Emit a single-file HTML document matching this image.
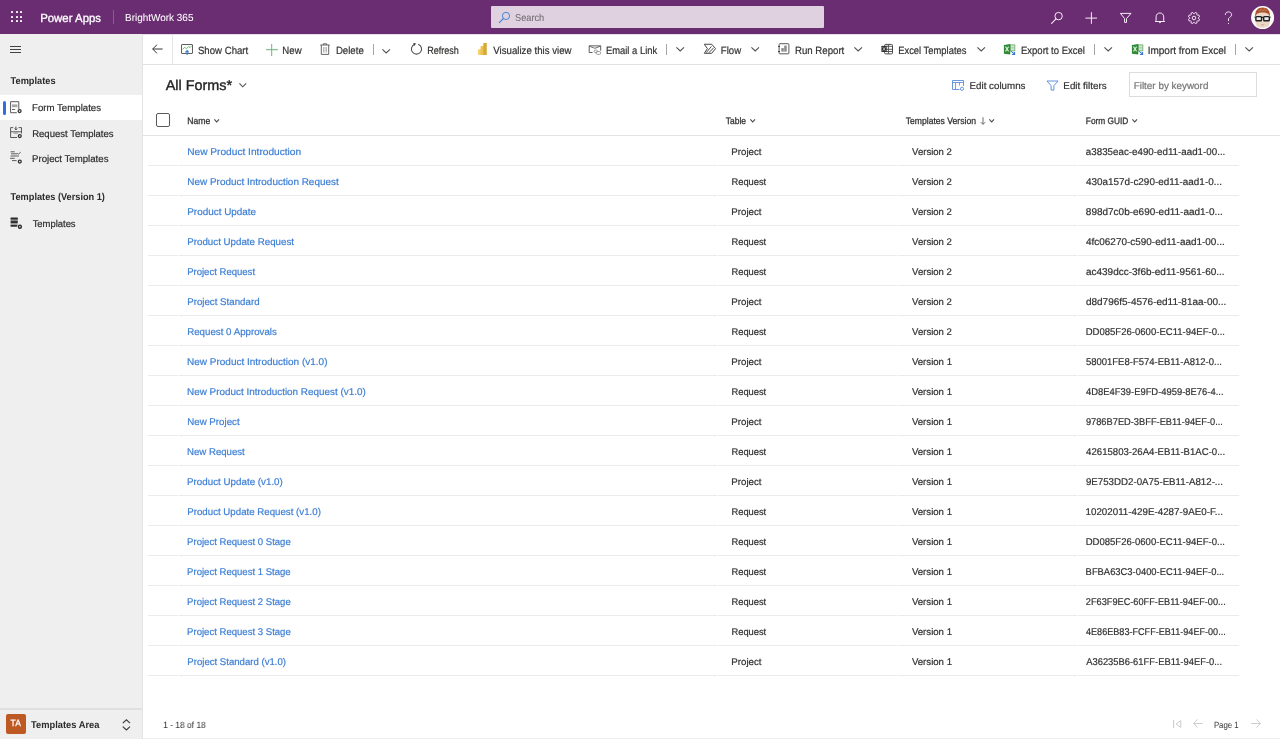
<!DOCTYPE html><html><head><meta charset="utf-8"><style>
*{margin:0;padding:0;box-sizing:border-box}
html,body{width:1280px;height:739px;overflow:hidden;background:#fff;font-family:"Liberation Sans",sans-serif}
.t{position:absolute;white-space:nowrap;line-height:20px;height:20px;text-rendering:geometricPrecision}
#root{position:absolute;left:0;top:0;width:1280px;height:739px;will-change:transform}
.b{position:absolute}
svg{position:absolute;overflow:visible}
</style></head><body><div id="root">
<div class="b" style="left:0;top:0;width:1280px;height:34px;background:#6b2d72"></div>
<div class="b" style="left:11.0px;top:11.0px;width:2.2px;height:2.2px;background:#fff;border-radius:0.4px"></div>
<div class="b" style="left:11.0px;top:15.6px;width:2.2px;height:2.2px;background:#fff;border-radius:0.4px"></div>
<div class="b" style="left:11.0px;top:20.2px;width:2.2px;height:2.2px;background:#fff;border-radius:0.4px"></div>
<div class="b" style="left:15.6px;top:11.0px;width:2.2px;height:2.2px;background:#fff;border-radius:0.4px"></div>
<div class="b" style="left:15.6px;top:15.6px;width:2.2px;height:2.2px;background:#fff;border-radius:0.4px"></div>
<div class="b" style="left:15.6px;top:20.2px;width:2.2px;height:2.2px;background:#fff;border-radius:0.4px"></div>
<div class="b" style="left:20.2px;top:11.0px;width:2.2px;height:2.2px;background:#fff;border-radius:0.4px"></div>
<div class="b" style="left:20.2px;top:15.6px;width:2.2px;height:2.2px;background:#fff;border-radius:0.4px"></div>
<div class="b" style="left:20.2px;top:20.2px;width:2.2px;height:2.2px;background:#fff;border-radius:0.4px"></div>
<div class="t" id="x18d236" style="left:40px;top:8.78px;font-size:11.7px;color:#fff;font-weight:400;-webkit-text-stroke:0.3px #fff;transform:translateX(0.176px) scaleX(0.9756);transform-origin:0 50%;">Power Apps</div>
<div class="b" style="left:113px;top:10px;width:1px;height:14px;background:#8e5a92"></div>
<div class="t" id="xe81292" style="left:125px;top:9.27px;font-size:10.3px;color:#fff;font-weight:400;-webkit-text-stroke:0.05px #fff;transform:translateX(0.061px) scaleX(0.9659);transform-origin:0 50%;">BrightWork 365</div>
<div class="b" style="left:491px;top:6px;width:333px;height:22px;background:#dfd1e0;border-radius:1px"></div>
<svg style="left:498px;top:11px" width="13" height="13" viewBox="0 0 13 13"><circle cx="8" cy="4.9" r="3.6" fill="none" stroke="#4a84d0" stroke-width="1"/><line x1="5.4" y1="7.5" x2="1.3" y2="11.6" stroke="#4a84d0" stroke-width="1.1" stroke-linecap="round"/></svg>
<div class="t" id="x43c09c" style="left:515px;top:8.97px;font-size:10.0px;color:#6f6a70;font-weight:400;-webkit-text-stroke:0.05px #6f6a70;transform:translateX(0.079px) scaleX(0.9200);transform-origin:0 50%;">Search</div>
<svg style="left:1050px;top:11px" width="14" height="14" viewBox="0 0 14 14"><circle cx="8.6" cy="5.1" r="3.7" fill="none" stroke="#f4eef5" stroke-width="1"/><line x1="6" y1="7.8" x2="1.6" y2="12.4" stroke="#f4eef5" stroke-width="1.1" stroke-linecap="round"/></svg>
<svg style="left:1085px;top:12px" width="13" height="13" viewBox="0 0 13 13"><line x1="6.4" y1="0.2" x2="6.4" y2="11.8" stroke="#f4eef5" stroke-width="1"/><line x1="0.4" y1="6.1" x2="12" y2="6.1" stroke="#f4eef5" stroke-width="1"/></svg>
<svg style="left:1119px;top:12px" width="13" height="12" viewBox="0 0 13 12"><path d="M1.4 1.4 H12 L7.5 6.6 V10.4 H5.6 V6.6 Z" fill="none" stroke="#f4eef5" stroke-width="1" stroke-linejoin="round"/></svg>
<svg style="left:1154px;top:12px" width="12" height="12" viewBox="0 0 12 12"><path d="M1.1 9.5 L2.1 8.7 V4.9 C2.1 2.5 3.7 1 5.9 1 C8.1 1 9.7 2.5 9.7 4.9 V8.7 L10.7 9.5 Z" fill="none" stroke="#f4eef5" stroke-width="1" stroke-linejoin="round"/><path d="M4.9 10.2 Q5.9 11.4 6.9 10.2" fill="#f4eef5" stroke="#f4eef5" stroke-width="0.8"/></svg>
<svg style="left:1187px;top:11px" width="14" height="14" viewBox="0 0 14 14"><path d="M11.38 7.41 L12.56 8.26 L11.82 10.04 L10.39 9.81 L9.81 10.39 L10.04 11.82 L8.26 12.56 L7.41 11.38 L6.59 11.38 L5.74 12.56 L3.96 11.82 L4.19 10.39 L3.61 9.81 L2.18 10.04 L1.44 8.26 L2.62 7.41 L2.62 6.59 L1.44 5.74 L2.18 3.96 L3.61 4.19 L4.19 3.61 L3.96 2.18 L5.74 1.44 L6.59 2.62 L7.41 2.62 L8.26 1.44 L10.04 2.18 L9.81 3.61 L10.39 4.19 L11.82 3.96 L12.56 5.74 L11.38 6.59 Z" fill="none" stroke="#f4eef5" stroke-width="0.95" stroke-linejoin="round"/><circle cx="7" cy="7" r="1.8" fill="none" stroke="#f4eef5" stroke-width="0.95"/></svg>
<svg style="left:1224px;top:11px" width="9" height="14" viewBox="0 0 9 14"><path d="M1.3 3.9 C1.3 2 2.6 0.9 4.5 0.9 C6.4 0.9 7.6 2.1 7.6 3.7 C7.6 5.6 5.6 6.1 4.5 7.6 V10" fill="none" stroke="#f4eef5" stroke-width="1"/><circle cx="4.5" cy="12.3" r="0.6" fill="#f4eef5"/></svg>
<svg style="left:1251px;top:5.5px" width="23" height="23" viewBox="0 0 23 23">
<circle cx="11.6" cy="11.6" r="11.5" fill="#fff"/>
<clipPath id="av"><circle cx="11.6" cy="11.6" r="10.4"/></clipPath>
<g clip-path="url(#av)">
<rect x="0" y="0" width="23" height="23" fill="#fbf7f4"/>
<path d="M4.6 10 C4.6 5 7.5 3.5 11.6 3.5 C15.7 3.5 18.6 5 18.6 10 V16 C18.6 20 15.5 23 11.6 23 C7.7 23 4.6 20 4.6 16 Z" fill="#ecd6c6"/>
<path d="M4.3 11 C3.8 5 6.5 1.2 11.6 1.2 C16.7 1.2 19.4 5 18.9 11 L17.8 8.6 C16.8 7.2 14 6.6 11.6 6.6 C9.2 6.6 6.4 7.2 5.4 8.6 Z" fill="#a8512c"/>
<path d="M7 3.2 L9 5.5 L10.2 2.6 L12 5.2 L13.6 2.4 L14.6 5.4 L16.6 3.6" fill="none" stroke="#d4895c" stroke-width="0.6"/>
<rect x="4.9" y="10.6" width="5.6" height="4.2" rx="0.8" fill="#e8eef0" stroke="#1e1e1e" stroke-width="1.4"/>
<rect x="12.7" y="10.6" width="5.6" height="4.2" rx="0.8" fill="#e8eef0" stroke="#1e1e1e" stroke-width="1.4"/>
<line x1="10.5" y1="11.4" x2="12.7" y2="11.4" stroke="#1e1e1e" stroke-width="1.1"/>
<line x1="3.5" y1="11.2" x2="4.9" y2="11.2" stroke="#1e1e1e" stroke-width="1"/>
<line x1="18.3" y1="11.2" x2="19.7" y2="11.2" stroke="#1e1e1e" stroke-width="1"/>
<path d="M10 18.6 Q11.6 19.4 13.2 18.6" stroke="#b89080" stroke-width="0.7" fill="none"/>
</g></svg>
<div class="b" style="left:0;top:34px;width:142px;height:705px;background:#efefef"></div>
<div class="b" style="left:142px;top:34px;width:1px;height:705px;background:#e3e3e3"></div>
<div class="b" style="left:10px;top:45.8px;width:11px;height:1.05px;background:#424242"></div>
<div class="b" style="left:10px;top:49.0px;width:11px;height:1.05px;background:#424242"></div>
<div class="b" style="left:10px;top:52.2px;width:11px;height:1.05px;background:#424242"></div>
<div class="t" id="x2fcbae" style="left:10px;top:71.86px;font-size:9.9px;color:#2b2b2b;font-weight:700;transform:translateX(0.574px) scaleX(0.9346);transform-origin:0 50%;">Templates</div>
<div class="b" style="left:0;top:95px;width:142px;height:25px;background:#fff"></div>
<div class="b" style="left:3px;top:100.5px;width:2.6px;height:14px;background:#2f6fe0;border-radius:2px"></div>
<div class="t" id="xf29466" style="left:32px;top:99.46px;font-size:9.8px;color:#2b2b2b;font-weight:400;-webkit-text-stroke:0.18px #2b2b2b;transform:translateX(0.030px) scaleX(0.9848);transform-origin:0 50%;">Form Templates</div>
<div class="t" id="xf2a408" style="left:32px;top:124.96px;font-size:9.8px;color:#2b2b2b;font-weight:400;-webkit-text-stroke:0.18px #2b2b2b;transform:translateX(0.192px) scaleX(0.9723);transform-origin:0 50%;">Request Templates</div>
<div class="t" id="x5faf2b" style="left:32px;top:149.76px;font-size:9.8px;color:#2b2b2b;font-weight:400;-webkit-text-stroke:0.18px #2b2b2b;transform:translateX(0.051px) scaleX(0.9838);transform-origin:0 50%;">Project Templates</div>
<div class="t" id="x6ffbcc" style="left:10px;top:187.76px;font-size:9.9px;color:#2b2b2b;font-weight:700;transform:translateX(0.574px) scaleX(0.9308);transform-origin:0 50%;">Templates (Version 1)</div>
<div class="t" id="x00e6b2" style="left:32px;top:215.16px;font-size:9.8px;color:#2b2b2b;font-weight:400;-webkit-text-stroke:0.18px #2b2b2b;transform:translateX(0.627px) scaleX(0.9620);transform-origin:0 50%;">Templates</div>
<svg style="left:10px;top:101px" width="13" height="13" viewBox="0 0 13 13"><path d="M6.8 11.7 H0.6 V0.7 H8.8 V8" fill="none" stroke="#5a5a5a" stroke-width="1"/><rect x="2" y="3.4" width="5.5" height="2.8" fill="#a8a8a8"/><line x1="2" y1="8.5" x2="5.2" y2="8.5" stroke="#555" stroke-width="0.9"/><circle cx="9.6" cy="10.1" r="1.45" fill="none" stroke="#333" stroke-width="1.3"/></svg>
<svg style="left:10px;top:126px" width="13" height="13" viewBox="0 0 13 13"><path d="M3.2 1.6 H0.6 V11.5 H7 M8.6 1.6 H11.5 V7.5" fill="none" stroke="#5a5a5a" stroke-width="1"/><path d="M5.9 0.6 V3.8 M4.6 2.6 L5.9 3.9 L7.2 2.6" fill="none" stroke="#444" stroke-width="1"/><path d="M0.6 5.8 H11.5" stroke="#5a5a5a" stroke-width="1"/><rect x="3.6" y="6.6" width="4.2" height="1" fill="#888"/><circle cx="9.8" cy="10.1" r="1.45" fill="none" stroke="#333" stroke-width="1.3"/></svg>
<svg style="left:10px;top:151px" width="13" height="13" viewBox="0 0 13 13"><g stroke="#555" stroke-width="0.95" fill="none"><line x1="0.6" y1="0.8" x2="4.7" y2="0.8"/><line x1="1" y1="2.8" x2="7" y2="2.8"/><line x1="0.6" y1="5" x2="8.9" y2="5"/><line x1="0.1" y1="7.3" x2="4.7" y2="7.3"/><line x1="2" y1="9.6" x2="6.6" y2="9.6"/><path d="M7.2 2.3 L8.3 3.2 L10.7 1.2"/></g><circle cx="9.8" cy="10.6" r="1.45" fill="none" stroke="#333" stroke-width="1.3"/></svg>
<svg style="left:10px;top:217px" width="13" height="13" viewBox="0 0 13 13"><g fill="#2e2e2e"><rect x="0.4" y="0.4" width="7.6" height="2.4" rx="1"/><rect x="0.4" y="4.1" width="7.6" height="1.9" rx="0.9"/><rect x="0.4" y="7.8" width="7" height="2" rx="1"/></g><rect x="0.6" y="2.8" width="7.2" height="1.3" fill="#888"/><rect x="0.6" y="6" width="7.2" height="1.8" fill="#999"/><circle cx="9.9" cy="9.8" r="1.5" fill="none" stroke="#2e2e2e" stroke-width="1.4"/></svg>
<div class="b" style="left:0;top:708.2px;width:142px;height:1.4px;background:#e0e0e0"></div>
<div class="b" style="left:6px;top:714.3px;width:19.8px;height:19.7px;background:#bd5a24;border-radius:2px"></div>
<div class="t" id="x807190" style="left:10px;top:713.46px;font-size:9.2px;color:#fff;font-weight:400;-webkit-text-stroke:0.25px #fff;transform:translateX(0.600px) scaleX(0.9200);transform-origin:0 50%;">TA</div>
<div class="t" id="xf5900a" style="left:31px;top:716.46px;font-size:9.9px;color:#2b2b2b;font-weight:700;transform:translateX(0.123px) scaleX(0.9421);transform-origin:0 50%;">Templates Area</div>
<svg style="left:122px;top:718.5px" width="9" height="12" viewBox="0 0 9 12"><path d="M0.8 4.2 L4.4 0.8 L8 4.2 M0.8 7.6 L4.4 11 L8 7.6" fill="none" stroke="#3a3a3a" stroke-width="1.1"/></svg>
<div class="b" style="left:143px;top:64px;width:1137px;height:1px;background:#e1e1e1"></div>
<div class="b" style="left:143px;top:34px;width:1137px;height:1px;background:#e6dbe8"></div>
<div class="b" style="left:172px;top:34px;width:1px;height:30px;background:#e6e6e6"></div>
<svg style="left:152px;top:44px" width="11" height="10" viewBox="0 0 11 10"><path d="M5 0.6 L0.7 5 L5 9.4 M0.7 5 H10.6" fill="none" stroke="#333" stroke-width="1"/></svg>
<div class="t" id="x7f6c63" style="left:197px;top:40.87px;font-size:10.5px;color:#323130;font-weight:400;-webkit-text-stroke:0.2px #323130;transform:translateX(0.957px) scaleX(0.9161);transform-origin:0 50%;">Show Chart</div>
<div class="t" id="xf1ddd7" style="left:282px;top:40.87px;font-size:10.5px;color:#323130;font-weight:400;-webkit-text-stroke:0.2px #323130;transform:translateX(0.346px) scaleX(0.9160);transform-origin:0 50%;">New</div>
<div class="t" id="xbff0ca" style="left:335px;top:40.87px;font-size:10.5px;color:#323130;font-weight:400;-webkit-text-stroke:0.2px #323130;transform:translateX(0.888px) scaleX(0.9186);transform-origin:0 50%;">Delete</div>
<div class="t" id="x484978" style="left:427px;top:40.87px;font-size:10.5px;color:#323130;font-weight:400;-webkit-text-stroke:0.2px #323130;transform:translateX(0.240px) scaleX(0.8608);transform-origin:0 50%;">Refresh</div>
<div class="t" id="xdd81b7" style="left:493px;top:40.87px;font-size:10.5px;color:#323130;font-weight:400;-webkit-text-stroke:0.2px #323130;transform:translateX(0.316px) scaleX(0.9207);transform-origin:0 50%;">Visualize this view</div>
<div class="t" id="x4cb0bd" style="left:605px;top:40.87px;font-size:10.5px;color:#323130;font-weight:400;-webkit-text-stroke:0.2px #323130;transform:translateX(0.889px) scaleX(0.8965);transform-origin:0 50%;">Email a Link</div>
<div class="t" id="x7f5c37" style="left:720px;top:40.87px;font-size:10.5px;color:#323130;font-weight:400;-webkit-text-stroke:0.2px #323130;transform:translateX(0.820px) scaleX(0.9126);transform-origin:0 50%;">Flow</div>
<div class="t" id="x54bcff" style="left:794px;top:40.87px;font-size:10.5px;color:#323130;font-weight:400;-webkit-text-stroke:0.2px #323130;transform:translateX(0.924px) scaleX(0.9193);transform-origin:0 50%;">Run Report</div>
<div class="t" id="x347453" style="left:898px;top:40.87px;font-size:10.5px;color:#323130;font-weight:400;-webkit-text-stroke:0.2px #323130;transform:translateX(0.178px) scaleX(0.8949);transform-origin:0 50%;">Excel Templates</div>
<div class="t" id="xcdff4d" style="left:1020px;top:40.87px;font-size:10.5px;color:#323130;font-weight:400;-webkit-text-stroke:0.2px #323130;transform:translateX(0.939px) scaleX(0.9063);transform-origin:0 50%;">Export to Excel</div>
<div class="t" id="xe7a639" style="left:1147px;top:40.87px;font-size:10.5px;color:#323130;font-weight:400;-webkit-text-stroke:0.2px #323130;transform:translateX(0.702px) scaleX(0.9523);transform-origin:0 50%;">Import from Excel</div>
<div class="b" style="left:372.8px;top:43.7px;width:1px;height:10.9px;background:#a6a6a6"></div>
<svg style="left:382px;top:48.6px" width="8.4" height="4.3" viewBox="0 0 8.4 4.3"><path d="M0.4 0.4 L4.2 3.9 L8.0 0.4" fill="none" stroke="#505050" stroke-width="1.1"/></svg>
<div class="b" style="left:666.2px;top:43.7px;width:1px;height:10.9px;background:#a6a6a6"></div>
<svg style="left:675.7px;top:47.1px" width="8.4" height="4.3" viewBox="0 0 8.4 4.3"><path d="M0.4 0.4 L4.2 3.9 L8.0 0.4" fill="none" stroke="#505050" stroke-width="1.1"/></svg>
<svg style="left:751px;top:47.0px" width="8.4" height="4.3" viewBox="0 0 8.4 4.3"><path d="M0.4 0.4 L4.2 3.9 L8.0 0.4" fill="none" stroke="#505050" stroke-width="1.1"/></svg>
<svg style="left:854.3px;top:46.9px" width="8.4" height="4.3" viewBox="0 0 8.4 4.3"><path d="M0.4 0.4 L4.2 3.9 L8.0 0.4" fill="none" stroke="#505050" stroke-width="1.1"/></svg>
<svg style="left:977px;top:47.0px" width="8.4" height="4.3" viewBox="0 0 8.4 4.3"><path d="M0.4 0.4 L4.2 3.9 L8.0 0.4" fill="none" stroke="#505050" stroke-width="1.1"/></svg>
<div class="b" style="left:1094.2px;top:43.7px;width:1px;height:10.9px;background:#a6a6a6"></div>
<svg style="left:1103.5px;top:47.0px" width="8.4" height="4.3" viewBox="0 0 8.4 4.3"><path d="M0.4 0.4 L4.2 3.9 L8.0 0.4" fill="none" stroke="#505050" stroke-width="1.1"/></svg>
<div class="b" style="left:1235.2px;top:43.7px;width:1px;height:10.9px;background:#a6a6a6"></div>
<svg style="left:1244.5px;top:47.0px" width="8.4" height="4.3" viewBox="0 0 8.4 4.3"><path d="M0.4 0.4 L4.2 3.9 L8.0 0.4" fill="none" stroke="#505050" stroke-width="1.1"/></svg>
<svg style="left:181px;top:44px" width="12" height="11" viewBox="0 0 12 11"><rect x="0.5" y="0.5" width="11" height="9" rx="0.4" fill="none" stroke="#555" stroke-width="0.95"/><path d="M1.6 5.5 L3.6 3.3 L5.4 4.6 L7.6 2.6 L9 3.6 L10.6 1.9" fill="none" stroke="#5cb85c" stroke-width="0.9"/><path d="M6.1 11 V7 M4.4 8.4 L6.1 6.6 L7.8 8.4" fill="none" stroke="#3f7fd4" stroke-width="1.1"/></svg>
<svg style="left:265.5px;top:43.5px" width="12" height="12" viewBox="0 0 12 12"><path d="M5.7 0 V12 M0 5.7 H12" stroke="#5fb26a" stroke-width="0.95"/></svg>
<svg style="left:319.5px;top:43px" width="10" height="12" viewBox="0 0 10 12"><path d="M0.3 2 H9.7 M3.3 2 V0.8 H6.7 V2 M1.3 2 V11.4 H8.7 V2" fill="none" stroke="#555" stroke-width="0.9"/><path d="M3.5 4 V9.5 M5 4 V9.5 M6.5 4 V9.5" stroke="#888" stroke-width="0.6"/></svg>
<svg style="left:409px;top:42px" width="16" height="14" viewBox="0 0 16 14"><path d="M9.24 2.21 A5.1 5.1 0 1 1 5.76 2.21" fill="none" stroke="#4a4a4a" stroke-width="1.05"/><path d="M4.3 0.9 L7.1 1.5 L5.2 4.0 Z" fill="#333"/></svg>
<svg style="left:478.3px;top:43.2px" width="9" height="12" viewBox="0 0 9 12"><rect x="0" y="6.2" width="3.4" height="5.7" rx="0.5" fill="#f3d36a"/><rect x="2.6" y="3.1" width="3.4" height="8.8" rx="0.5" fill="#ebc14f"/><rect x="5.3" y="0" width="3.5" height="11.9" rx="0.5" fill="#d9a937"/></svg>
<svg style="left:588px;top:44px" width="14" height="12" viewBox="0 0 14 12"><path d="M4.5 8.5 H1.2 V1.85 H12.7 V6.7" fill="none" stroke="#555" stroke-width="0.95"/><path d="M1.2 2.1 L6.9 4.3 L12.7 2.1" fill="none" stroke="#666" stroke-width="0.95"/><rect x="6.1" y="6.1" width="3.3" height="2.4" rx="1.1" fill="none" stroke="#888" stroke-width="0.8"/><rect x="8.1" y="7.5" width="4.5" height="2.9" rx="1.2" fill="none" stroke="#888" stroke-width="0.8"/></svg>
<svg style="left:703px;top:43px" width="14" height="12" viewBox="0 0 14 12"><path d="M1.3 1.25 H8.7 L12.6 5.6 L8.7 10.3 H1.3 L4.4 5.6 Z" fill="none" stroke="#444" stroke-width="1" stroke-linejoin="round"/><path d="M3.3 9.6 L8.5 3.3 M5.9 9.8 L10.6 4.8" stroke="#444" stroke-width="0.95"/></svg>
<svg style="left:777px;top:42px" width="14" height="14" viewBox="0 0 14 14"><rect x="2.1" y="1.7" width="9.8" height="10.1" rx="0.8" fill="none" stroke="#5a5a5a" stroke-width="1"/><path d="M1 4.5 H3 M1 9.5 H3" stroke="#444" stroke-width="1.2"/><rect x="4.3" y="6.1" width="2.5" height="3.5" fill="#8a8a8a"/><rect x="7.2" y="3.6" width="2.5" height="6" fill="#8a8a8a"/></svg>
<svg style="left:880px;top:43px" width="14" height="12" viewBox="0 0 14 12"><rect x="4.6" y="1.4" width="7.9" height="9.5" rx="1" fill="#fff" stroke="#4a4a4a" stroke-width="1"/><path d="M4.6 3.3 H12.5 M4.6 6.3 H12.5 M4.6 8.5 H12.5 M8.4 1.4 V10.9" stroke="#4a4a4a" stroke-width="0.9"/><rect x="1.4" y="2.9" width="5.3" height="6.1" fill="#333"/><path d="M2.7 4.2 L5.4 7.7 M5.4 4.2 L2.7 7.7" stroke="#bbb" stroke-width="0.9"/></svg>
<svg style="left:1003px;top:43px" width="14" height="13" viewBox="0 0 14 13"><rect x="7.2" y="1.9" width="4.6" height="5.9" fill="#d3e8d3" stroke="#6fae6f" stroke-width="0.9"/><path d="M7.4 4.8 H11.6" stroke="#8fc08f" stroke-width="0.7"/><path d="M0.9 1.9 L7.3 0.9 V11.6 L0.9 10.7 Z" fill="#2f8a36"/><path d="M2.5 3.6 L5.6 8.4 M5.6 3.6 L2.5 8.4" stroke="#d8ecd8" stroke-width="1.1"/><path d="M8.3 8.3 L11.4 11.2 M11.6 8.9 V11.5 H9" fill="none" stroke="#3a78d0" stroke-width="1.1"/></svg>
<svg style="left:1130.5px;top:43px" width="14" height="13" viewBox="0 0 14 13"><rect x="7.2" y="1.9" width="4.6" height="5.9" fill="#d3e8d3" stroke="#6fae6f" stroke-width="0.9"/><path d="M7.4 4.8 H11.6" stroke="#8fc08f" stroke-width="0.7"/><path d="M0.9 1.9 L7.3 0.9 V11.6 L0.9 10.7 Z" fill="#2f8a36"/><path d="M2.5 3.6 L5.6 8.4 M5.6 3.6 L2.5 8.4" stroke="#d8ecd8" stroke-width="1.1"/><path d="M8.3 8.3 L11.4 11.2 M11.6 8.9 V11.5 H9" fill="none" stroke="#3a78d0" stroke-width="1.1"/></svg>
<div class="t" id="xefce2d" style="left:165px;top:76.11px;font-size:14.3px;color:#242424;font-weight:400;-webkit-text-stroke:0.38px #242424;transform:translateX(0.712px) scaleX(1.0084);transform-origin:0 50%;">All Forms*</div>
<svg style="left:239.3px;top:82.6px" width="7.6" height="4.2" viewBox="0 0 7.6 4.2"><path d="M0.4 0.4 L3.8 3.8000000000000003 L7.199999999999999 0.4" fill="none" stroke="#555" stroke-width="1.1"/></svg>
<svg style="left:951px;top:79px" width="13" height="12" viewBox="0 0 13 12"><path d="M8.5 10.5 H1.5 V1.5 H12.5 V7" fill="none" stroke="#5a8fd8" stroke-width="0.9"/><path d="M1.5 3.5 H12.5 M4.5 3.5 V10.5 M8.5 3.5 V6.5" stroke="#5a8fd8" stroke-width="0.85"/><circle cx="11" cy="9.8" r="1.6" fill="none" stroke="#5a8fd8" stroke-width="0.9"/></svg>
<div class="t" id="x24ceb3" style="left:969px;top:76.96px;font-size:9.8px;color:#323130;font-weight:400;-webkit-text-stroke:0.2px #323130;transform:translateX(0.600px) scaleX(0.9956);transform-origin:0 50%;">Edit columns</div>
<svg style="left:1045.5px;top:79.5px" width="13" height="11" viewBox="0 0 13 11"><path d="M1 1 H12 L7.9 5.7 V10.1 H5.1 V5.7 Z" fill="none" stroke="#5a8fd8" stroke-width="0.95" stroke-linejoin="round"/></svg>
<div class="t" id="xe03686" style="left:1063px;top:76.96px;font-size:9.8px;color:#323130;font-weight:400;-webkit-text-stroke:0.2px #323130;transform:translateX(0.315px) scaleX(1.0062);transform-origin:0 50%;">Edit filters</div>
<div class="b" style="left:1128.5px;top:72px;width:128.5px;height:25px;border:1px solid #dcdcdc;background:#fff"></div>
<div class="t" id="xbbfc74" style="left:1133px;top:76.96px;font-size:9.84px;color:#767676;font-weight:400;-webkit-text-stroke:0.2px #767676;transform:translateX(0.669px) scaleX(1.0061);transform-origin:0 50%;">Filter by keyword</div>
<div class="b" style="left:155.7px;top:113px;width:14.2px;height:14px;border:1.6px solid #5a5a5a;border-radius:2px"></div>
<div class="t" id="xc32966" style="left:187px;top:111.36px;font-size:9.4px;color:#323130;font-weight:400;-webkit-text-stroke:0.28px #323130;transform:translateX(0.318px) scaleX(0.9126);transform-origin:0 50%;">Name</div>
<svg style="left:213.5px;top:118.8px" width="5.4" height="3.4" viewBox="0 0 5.4 3.4"><path d="M0.4 0.4 L2.7 3.0 L5.0 0.4" fill="none" stroke="#444" stroke-width="1.1"/></svg>
<div class="t" id="xff481f" style="left:725px;top:111.36px;font-size:9.4px;color:#323130;font-weight:400;-webkit-text-stroke:0.28px #323130;transform:translateX(0.791px) scaleX(0.9025);transform-origin:0 50%;">Table</div>
<svg style="left:749.6px;top:118.8px" width="5.4" height="3.4" viewBox="0 0 5.4 3.4"><path d="M0.4 0.4 L2.7 3.0 L5.0 0.4" fill="none" stroke="#444" stroke-width="1.1"/></svg>
<div class="t" id="x9e57e9" style="left:905px;top:111.36px;font-size:9.4px;color:#323130;font-weight:400;-webkit-text-stroke:0.28px #323130;transform:translateX(0.753px) scaleX(0.9165);transform-origin:0 50%;">Templates Version</div>
<svg style="left:980px;top:117px" width="6" height="8" viewBox="0 0 6 8"><path d="M3 0.2 V7.2 M0.8 5.2 L3 7.4 L5.2 5.2" fill="none" stroke="#555" stroke-width="0.85"/></svg>
<svg style="left:989.3px;top:118.8px" width="5.4" height="3.4" viewBox="0 0 5.4 3.4"><path d="M0.4 0.4 L2.7 3.0 L5.0 0.4" fill="none" stroke="#444" stroke-width="1.1"/></svg>
<div class="t" id="x270663" style="left:1085px;top:111.36px;font-size:9.4px;color:#323130;font-weight:400;-webkit-text-stroke:0.28px #323130;transform:translateX(0.871px) scaleX(0.8867);transform-origin:0 50%;">Form GUID</div>
<svg style="left:1132px;top:118.8px" width="5.4" height="3.4" viewBox="0 0 5.4 3.4"><path d="M0.4 0.4 L2.7 3.0 L5.0 0.4" fill="none" stroke="#444" stroke-width="1.1"/></svg>
<div class="b" style="left:143px;top:135px;width:1137px;height:1px;background:#e3e3e3"></div>
<div class="t" id="x11a5d0" style="left:187px;top:143.06px;font-size:9.8px;color:#3d7fd4;font-weight:400;-webkit-text-stroke:0.2px #3d7fd4;transform:translateX(0.213px) scaleX(1.0357);transform-origin:0 50%;">New Product Introduction</div>
<div class="t" id="xa6b5e2" style="left:731px;top:143.06px;font-size:9.6px;color:#323130;font-weight:400;-webkit-text-stroke:0.2px #323130;transform:translateX(0.361px) scaleX(1.0081);transform-origin:0 50%;">Project</div>
<div class="t" id="xc9414d" style="left:912px;top:143.06px;font-size:9.67px;color:#323130;font-weight:400;-webkit-text-stroke:0.2px #323130;transform:translateX(0.120px) scaleX(0.9864);transform-origin:0 50%;">Version 2</div>
<div class="t" id="x48b033" style="left:1085px;top:143.06px;font-size:9.84px;color:#323130;font-weight:400;-webkit-text-stroke:0.2px #323130;transform:translateX(0.857px) scaleX(0.9943);transform-origin:0 50%;">a3835eac-e490-ed11-aad1-00...</div>
<div class="b" style="left:148px;top:165px;width:30px;height:1px;background:#ebebeb"></div>
<div class="b" style="left:179px;top:165px;width:538px;height:1px;background:#ebebeb"></div>
<div class="b" style="left:718px;top:165px;width:179px;height:1px;background:#ebebeb"></div>
<div class="b" style="left:898px;top:165px;width:179px;height:1px;background:#ebebeb"></div>
<div class="b" style="left:1078px;top:165px;width:161px;height:1px;background:#ebebeb"></div>
<div class="t" id="x69be9d" style="left:187px;top:173.06px;font-size:9.8px;color:#3d7fd4;font-weight:400;-webkit-text-stroke:0.2px #3d7fd4;transform:translateX(0.307px) scaleX(1.0146);transform-origin:0 50%;">New Product Introduction Request</div>
<div class="t" id="x4a6cc8" style="left:731px;top:173.06px;font-size:9.6px;color:#323130;font-weight:400;-webkit-text-stroke:0.2px #323130;transform:translateX(0.444px) scaleX(0.9730);transform-origin:0 50%;">Request</div>
<div class="t" id="x4c1581" style="left:912px;top:173.06px;font-size:9.67px;color:#323130;font-weight:400;-webkit-text-stroke:0.2px #323130;transform:translateX(0.120px) scaleX(0.9864);transform-origin:0 50%;">Version 2</div>
<div class="t" id="xdd7307" style="left:1085px;top:173.06px;font-size:9.84px;color:#323130;font-weight:400;-webkit-text-stroke:0.2px #323130;transform:translateX(0.981px) scaleX(1.0089);transform-origin:0 50%;">430a157d-c290-ed11-aad1-0...</div>
<div class="b" style="left:148px;top:195px;width:30px;height:1px;background:#ebebeb"></div>
<div class="b" style="left:179px;top:195px;width:538px;height:1px;background:#ebebeb"></div>
<div class="b" style="left:718px;top:195px;width:179px;height:1px;background:#ebebeb"></div>
<div class="b" style="left:898px;top:195px;width:179px;height:1px;background:#ebebeb"></div>
<div class="b" style="left:1078px;top:195px;width:161px;height:1px;background:#ebebeb"></div>
<div class="t" id="xd3003d" style="left:187px;top:203.06px;font-size:9.8px;color:#3d7fd4;font-weight:400;-webkit-text-stroke:0.2px #3d7fd4;transform:translateX(0.210px) scaleX(1.0124);transform-origin:0 50%;">Product Update</div>
<div class="t" id="x3bc0d1" style="left:731px;top:203.06px;font-size:9.6px;color:#323130;font-weight:400;-webkit-text-stroke:0.2px #323130;transform:translateX(0.361px) scaleX(1.0081);transform-origin:0 50%;">Project</div>
<div class="t" id="x305921" style="left:912px;top:203.06px;font-size:9.67px;color:#323130;font-weight:400;-webkit-text-stroke:0.2px #323130;transform:translateX(0.120px) scaleX(0.9864);transform-origin:0 50%;">Version 2</div>
<div class="t" id="x3025d1" style="left:1085px;top:203.06px;font-size:9.84px;color:#323130;font-weight:400;-webkit-text-stroke:0.2px #323130;transform:translateX(0.846px) scaleX(1.0163);transform-origin:0 50%;">898d7c0b-e690-ed11-aad1-0...</div>
<div class="b" style="left:148px;top:225px;width:30px;height:1px;background:#ebebeb"></div>
<div class="b" style="left:179px;top:225px;width:538px;height:1px;background:#ebebeb"></div>
<div class="b" style="left:718px;top:225px;width:179px;height:1px;background:#ebebeb"></div>
<div class="b" style="left:898px;top:225px;width:179px;height:1px;background:#ebebeb"></div>
<div class="b" style="left:1078px;top:225px;width:161px;height:1px;background:#ebebeb"></div>
<div class="t" id="xf7fecd" style="left:187px;top:233.06px;font-size:9.8px;color:#3d7fd4;font-weight:400;-webkit-text-stroke:0.2px #3d7fd4;transform:translateX(0.246px) scaleX(0.9951);transform-origin:0 50%;">Product Update Request</div>
<div class="t" id="xbd7dbe" style="left:731px;top:233.06px;font-size:9.6px;color:#323130;font-weight:400;-webkit-text-stroke:0.2px #323130;transform:translateX(0.444px) scaleX(0.9730);transform-origin:0 50%;">Request</div>
<div class="t" id="x5b8603" style="left:912px;top:233.06px;font-size:9.67px;color:#323130;font-weight:400;-webkit-text-stroke:0.2px #323130;transform:translateX(0.120px) scaleX(0.9864);transform-origin:0 50%;">Version 2</div>
<div class="t" id="xd60af7" style="left:1086px;top:233.06px;font-size:9.84px;color:#323130;font-weight:400;-webkit-text-stroke:0.2px #323130;transform:translateX(0.005px) scaleX(1.0126);transform-origin:0 50%;">4fc06270-c590-ed11-aad1-00...</div>
<div class="b" style="left:148px;top:255px;width:30px;height:1px;background:#ebebeb"></div>
<div class="b" style="left:179px;top:255px;width:538px;height:1px;background:#ebebeb"></div>
<div class="b" style="left:718px;top:255px;width:179px;height:1px;background:#ebebeb"></div>
<div class="b" style="left:898px;top:255px;width:179px;height:1px;background:#ebebeb"></div>
<div class="b" style="left:1078px;top:255px;width:161px;height:1px;background:#ebebeb"></div>
<div class="t" id="x4b6324" style="left:187px;top:263.06px;font-size:9.8px;color:#3d7fd4;font-weight:400;-webkit-text-stroke:0.2px #3d7fd4;transform:translateX(0.135px) scaleX(0.9742);transform-origin:0 50%;">Project Request</div>
<div class="t" id="xe28792" style="left:731px;top:263.06px;font-size:9.6px;color:#323130;font-weight:400;-webkit-text-stroke:0.2px #323130;transform:translateX(0.444px) scaleX(0.9730);transform-origin:0 50%;">Request</div>
<div class="t" id="x191715" style="left:912px;top:263.06px;font-size:9.67px;color:#323130;font-weight:400;-webkit-text-stroke:0.2px #323130;transform:translateX(0.120px) scaleX(0.9864);transform-origin:0 50%;">Version 2</div>
<div class="t" id="x748333" style="left:1085px;top:263.06px;font-size:9.84px;color:#323130;font-weight:400;-webkit-text-stroke:0.2px #323130;transform:translateX(0.964px) scaleX(1.0163);transform-origin:0 50%;">ac439dcc-3f6b-ed11-9561-60...</div>
<div class="b" style="left:148px;top:285px;width:30px;height:1px;background:#ebebeb"></div>
<div class="b" style="left:179px;top:285px;width:538px;height:1px;background:#ebebeb"></div>
<div class="b" style="left:718px;top:285px;width:179px;height:1px;background:#ebebeb"></div>
<div class="b" style="left:898px;top:285px;width:179px;height:1px;background:#ebebeb"></div>
<div class="b" style="left:1078px;top:285px;width:161px;height:1px;background:#ebebeb"></div>
<div class="t" id="x93fa8f" style="left:187px;top:293.06px;font-size:9.8px;color:#3d7fd4;font-weight:400;-webkit-text-stroke:0.2px #3d7fd4;transform:translateX(0.182px) scaleX(0.9914);transform-origin:0 50%;">Project Standard</div>
<div class="t" id="xf0436d" style="left:731px;top:293.06px;font-size:9.6px;color:#323130;font-weight:400;-webkit-text-stroke:0.2px #323130;transform:translateX(0.361px) scaleX(1.0081);transform-origin:0 50%;">Project</div>
<div class="t" id="x84a68a" style="left:912px;top:293.06px;font-size:9.67px;color:#323130;font-weight:400;-webkit-text-stroke:0.2px #323130;transform:translateX(0.120px) scaleX(0.9864);transform-origin:0 50%;">Version 2</div>
<div class="t" id="x30ccb2" style="left:1085px;top:293.06px;font-size:9.84px;color:#323130;font-weight:400;-webkit-text-stroke:0.2px #323130;transform:translateX(0.892px) scaleX(1.0174);transform-origin:0 50%;">d8d796f5-4576-ed11-81aa-00...</div>
<div class="b" style="left:148px;top:315px;width:30px;height:1px;background:#ebebeb"></div>
<div class="b" style="left:179px;top:315px;width:538px;height:1px;background:#ebebeb"></div>
<div class="b" style="left:718px;top:315px;width:179px;height:1px;background:#ebebeb"></div>
<div class="b" style="left:898px;top:315px;width:179px;height:1px;background:#ebebeb"></div>
<div class="b" style="left:1078px;top:315px;width:161px;height:1px;background:#ebebeb"></div>
<div class="t" id="x706f9d" style="left:187px;top:323.06px;font-size:9.8px;color:#3d7fd4;font-weight:400;-webkit-text-stroke:0.2px #3d7fd4;transform:translateX(0.201px) scaleX(0.9918);transform-origin:0 50%;">Request 0 Approvals</div>
<div class="t" id="xca2347" style="left:731px;top:323.06px;font-size:9.6px;color:#323130;font-weight:400;-webkit-text-stroke:0.2px #323130;transform:translateX(0.444px) scaleX(0.9730);transform-origin:0 50%;">Request</div>
<div class="t" id="xa31e71" style="left:912px;top:323.06px;font-size:9.67px;color:#323130;font-weight:400;-webkit-text-stroke:0.2px #323130;transform:translateX(0.120px) scaleX(0.9864);transform-origin:0 50%;">Version 2</div>
<div class="t" id="x556c33" style="left:1085px;top:323.06px;font-size:9.84px;color:#323130;font-weight:400;-webkit-text-stroke:0.2px #323130;transform:translateX(0.660px) scaleX(0.9708);transform-origin:0 50%;">DD085F26-0600-EC11-94EF-0...</div>
<div class="b" style="left:148px;top:345px;width:30px;height:1px;background:#ebebeb"></div>
<div class="b" style="left:179px;top:345px;width:538px;height:1px;background:#ebebeb"></div>
<div class="b" style="left:718px;top:345px;width:179px;height:1px;background:#ebebeb"></div>
<div class="b" style="left:898px;top:345px;width:179px;height:1px;background:#ebebeb"></div>
<div class="b" style="left:1078px;top:345px;width:161px;height:1px;background:#ebebeb"></div>
<div class="t" id="x3ef249" style="left:187px;top:353.06px;font-size:9.8px;color:#3d7fd4;font-weight:400;-webkit-text-stroke:0.2px #3d7fd4;transform:translateX(0.036px) scaleX(1.0194);transform-origin:0 50%;">New Product Introduction (v1.0)</div>
<div class="t" id="xbb7d70" style="left:731px;top:353.06px;font-size:9.6px;color:#323130;font-weight:400;-webkit-text-stroke:0.2px #323130;transform:translateX(0.361px) scaleX(1.0081);transform-origin:0 50%;">Project</div>
<div class="t" id="xaf7456" style="left:911px;top:353.06px;font-size:9.67px;color:#323130;font-weight:400;-webkit-text-stroke:0.2px #323130;transform:translateX(0.891px) scaleX(0.9959);transform-origin:0 50%;">Version 1</div>
<div class="t" id="x365c75" style="left:1085px;top:353.06px;font-size:9.84px;color:#323130;font-weight:400;-webkit-text-stroke:0.2px #323130;transform:translateX(0.905px) scaleX(0.9663);transform-origin:0 50%;">58001FE8-F574-EB11-A812-0...</div>
<div class="b" style="left:148px;top:375px;width:30px;height:1px;background:#ebebeb"></div>
<div class="b" style="left:179px;top:375px;width:538px;height:1px;background:#ebebeb"></div>
<div class="b" style="left:718px;top:375px;width:179px;height:1px;background:#ebebeb"></div>
<div class="b" style="left:898px;top:375px;width:179px;height:1px;background:#ebebeb"></div>
<div class="b" style="left:1078px;top:375px;width:161px;height:1px;background:#ebebeb"></div>
<div class="t" id="xf7b9f3" style="left:187px;top:383.06px;font-size:9.8px;color:#3d7fd4;font-weight:400;-webkit-text-stroke:0.2px #3d7fd4;transform:translateX(0.039px) scaleX(1.0096);transform-origin:0 50%;">New Product Introduction Request (v1.0)</div>
<div class="t" id="x511190" style="left:731px;top:383.06px;font-size:9.6px;color:#323130;font-weight:400;-webkit-text-stroke:0.2px #323130;transform:translateX(0.444px) scaleX(0.9730);transform-origin:0 50%;">Request</div>
<div class="t" id="x764ecf" style="left:911px;top:383.06px;font-size:9.67px;color:#323130;font-weight:400;-webkit-text-stroke:0.2px #323130;transform:translateX(0.891px) scaleX(0.9959);transform-origin:0 50%;">Version 1</div>
<div class="t" id="xdb9d20" style="left:1086px;top:383.06px;font-size:9.84px;color:#323130;font-weight:400;-webkit-text-stroke:0.2px #323130;transform:translateX(0.048px) scaleX(0.9567);transform-origin:0 50%;">4D8E4F39-E9FD-4959-8E76-4...</div>
<div class="b" style="left:148px;top:405px;width:30px;height:1px;background:#ebebeb"></div>
<div class="b" style="left:179px;top:405px;width:538px;height:1px;background:#ebebeb"></div>
<div class="b" style="left:718px;top:405px;width:179px;height:1px;background:#ebebeb"></div>
<div class="b" style="left:898px;top:405px;width:179px;height:1px;background:#ebebeb"></div>
<div class="b" style="left:1078px;top:405px;width:161px;height:1px;background:#ebebeb"></div>
<div class="t" id="x8251b3" style="left:187px;top:413.06px;font-size:9.8px;color:#3d7fd4;font-weight:400;-webkit-text-stroke:0.2px #3d7fd4;transform:translateX(0.211px) scaleX(0.9918);transform-origin:0 50%;">New Project</div>
<div class="t" id="xb96895" style="left:731px;top:413.06px;font-size:9.6px;color:#323130;font-weight:400;-webkit-text-stroke:0.2px #323130;transform:translateX(0.361px) scaleX(1.0081);transform-origin:0 50%;">Project</div>
<div class="t" id="x0adf91" style="left:911px;top:413.06px;font-size:9.67px;color:#323130;font-weight:400;-webkit-text-stroke:0.2px #323130;transform:translateX(0.891px) scaleX(0.9959);transform-origin:0 50%;">Version 1</div>
<div class="t" id="xbe67a2" style="left:1085px;top:413.06px;font-size:9.84px;color:#323130;font-weight:400;-webkit-text-stroke:0.2px #323130;transform:translateX(0.890px) scaleX(0.9442);transform-origin:0 50%;">9786B7ED-3BFF-EB11-94EF-0...</div>
<div class="b" style="left:148px;top:435px;width:30px;height:1px;background:#ebebeb"></div>
<div class="b" style="left:179px;top:435px;width:538px;height:1px;background:#ebebeb"></div>
<div class="b" style="left:718px;top:435px;width:179px;height:1px;background:#ebebeb"></div>
<div class="b" style="left:898px;top:435px;width:179px;height:1px;background:#ebebeb"></div>
<div class="b" style="left:1078px;top:435px;width:161px;height:1px;background:#ebebeb"></div>
<div class="t" id="x356cb0" style="left:187px;top:443.06px;font-size:9.8px;color:#3d7fd4;font-weight:400;-webkit-text-stroke:0.2px #3d7fd4;transform:translateX(0.007px) scaleX(0.9826);transform-origin:0 50%;">New Request</div>
<div class="t" id="x487409" style="left:731px;top:443.06px;font-size:9.6px;color:#323130;font-weight:400;-webkit-text-stroke:0.2px #323130;transform:translateX(0.444px) scaleX(0.9730);transform-origin:0 50%;">Request</div>
<div class="t" id="xb79a54" style="left:911px;top:443.06px;font-size:9.67px;color:#323130;font-weight:400;-webkit-text-stroke:0.2px #323130;transform:translateX(0.891px) scaleX(0.9959);transform-origin:0 50%;">Version 1</div>
<div class="t" id="x865225" style="left:1086px;top:443.06px;font-size:9.84px;color:#323130;font-weight:400;-webkit-text-stroke:0.2px #323130;transform:translateX(0.122px) scaleX(0.9764);transform-origin:0 50%;">42615803-26A4-EB11-B1AC-0...</div>
<div class="b" style="left:148px;top:465px;width:30px;height:1px;background:#ebebeb"></div>
<div class="b" style="left:179px;top:465px;width:538px;height:1px;background:#ebebeb"></div>
<div class="b" style="left:718px;top:465px;width:179px;height:1px;background:#ebebeb"></div>
<div class="b" style="left:898px;top:465px;width:179px;height:1px;background:#ebebeb"></div>
<div class="b" style="left:1078px;top:465px;width:161px;height:1px;background:#ebebeb"></div>
<div class="t" id="xea2134" style="left:187px;top:473.06px;font-size:9.8px;color:#3d7fd4;font-weight:400;-webkit-text-stroke:0.2px #3d7fd4;transform:translateX(0.041px) scaleX(0.9994);transform-origin:0 50%;">Product Update (v1.0)</div>
<div class="t" id="x5b14b9" style="left:731px;top:473.06px;font-size:9.6px;color:#323130;font-weight:400;-webkit-text-stroke:0.2px #323130;transform:translateX(0.361px) scaleX(1.0081);transform-origin:0 50%;">Project</div>
<div class="t" id="xf04ac3" style="left:911px;top:473.06px;font-size:9.67px;color:#323130;font-weight:400;-webkit-text-stroke:0.2px #323130;transform:translateX(0.891px) scaleX(0.9959);transform-origin:0 50%;">Version 1</div>
<div class="t" id="xe2ee3c" style="left:1085px;top:473.06px;font-size:9.84px;color:#323130;font-weight:400;-webkit-text-stroke:0.2px #323130;transform:translateX(0.879px) scaleX(0.9893);transform-origin:0 50%;">9E753DD2-0A75-EB11-A812-...</div>
<div class="b" style="left:148px;top:495px;width:30px;height:1px;background:#ebebeb"></div>
<div class="b" style="left:179px;top:495px;width:538px;height:1px;background:#ebebeb"></div>
<div class="b" style="left:718px;top:495px;width:179px;height:1px;background:#ebebeb"></div>
<div class="b" style="left:898px;top:495px;width:179px;height:1px;background:#ebebeb"></div>
<div class="b" style="left:1078px;top:495px;width:161px;height:1px;background:#ebebeb"></div>
<div class="t" id="x08549f" style="left:187px;top:503.06px;font-size:9.8px;color:#3d7fd4;font-weight:400;-webkit-text-stroke:0.2px #3d7fd4;transform:translateX(0.280px) scaleX(0.9892);transform-origin:0 50%;">Product Update Request (v1.0)</div>
<div class="t" id="x572751" style="left:731px;top:503.06px;font-size:9.6px;color:#323130;font-weight:400;-webkit-text-stroke:0.2px #323130;transform:translateX(0.444px) scaleX(0.9730);transform-origin:0 50%;">Request</div>
<div class="t" id="xe8bbe3" style="left:911px;top:503.06px;font-size:9.67px;color:#323130;font-weight:400;-webkit-text-stroke:0.2px #323130;transform:translateX(0.891px) scaleX(0.9959);transform-origin:0 50%;">Version 1</div>
<div class="t" id="xdf69d8" style="left:1085px;top:503.06px;font-size:9.84px;color:#323130;font-weight:400;-webkit-text-stroke:0.2px #323130;transform:translateX(0.499px) scaleX(0.9957);transform-origin:0 50%;">10202011-429E-4287-9AE0-F...</div>
<div class="b" style="left:148px;top:525px;width:30px;height:1px;background:#ebebeb"></div>
<div class="b" style="left:179px;top:525px;width:538px;height:1px;background:#ebebeb"></div>
<div class="b" style="left:718px;top:525px;width:179px;height:1px;background:#ebebeb"></div>
<div class="b" style="left:898px;top:525px;width:179px;height:1px;background:#ebebeb"></div>
<div class="b" style="left:1078px;top:525px;width:161px;height:1px;background:#ebebeb"></div>
<div class="t" id="xc5f7b3" style="left:187px;top:533.06px;font-size:9.8px;color:#3d7fd4;font-weight:400;-webkit-text-stroke:0.2px #3d7fd4;transform:translateX(0.096px) scaleX(0.9759);transform-origin:0 50%;">Project Request 0 Stage</div>
<div class="t" id="xb93e80" style="left:731px;top:533.06px;font-size:9.6px;color:#323130;font-weight:400;-webkit-text-stroke:0.2px #323130;transform:translateX(0.444px) scaleX(0.9730);transform-origin:0 50%;">Request</div>
<div class="t" id="xcda1e8" style="left:911px;top:533.06px;font-size:9.67px;color:#323130;font-weight:400;-webkit-text-stroke:0.2px #323130;transform:translateX(0.891px) scaleX(0.9959);transform-origin:0 50%;">Version 1</div>
<div class="t" id="x7101d4" style="left:1085px;top:533.06px;font-size:9.84px;color:#323130;font-weight:400;-webkit-text-stroke:0.2px #323130;transform:translateX(0.660px) scaleX(0.9708);transform-origin:0 50%;">DD085F26-0600-EC11-94EF-0...</div>
<div class="b" style="left:148px;top:555px;width:30px;height:1px;background:#ebebeb"></div>
<div class="b" style="left:179px;top:555px;width:538px;height:1px;background:#ebebeb"></div>
<div class="b" style="left:718px;top:555px;width:179px;height:1px;background:#ebebeb"></div>
<div class="b" style="left:898px;top:555px;width:179px;height:1px;background:#ebebeb"></div>
<div class="b" style="left:1078px;top:555px;width:161px;height:1px;background:#ebebeb"></div>
<div class="t" id="x4dd4dd" style="left:187px;top:563.06px;font-size:9.8px;color:#3d7fd4;font-weight:400;-webkit-text-stroke:0.2px #3d7fd4;transform:translateX(0.120px) scaleX(0.9751);transform-origin:0 50%;">Project Request 1 Stage</div>
<div class="t" id="xaed505" style="left:731px;top:563.06px;font-size:9.6px;color:#323130;font-weight:400;-webkit-text-stroke:0.2px #323130;transform:translateX(0.444px) scaleX(0.9730);transform-origin:0 50%;">Request</div>
<div class="t" id="x3b528e" style="left:911px;top:563.06px;font-size:9.67px;color:#323130;font-weight:400;-webkit-text-stroke:0.2px #323130;transform:translateX(0.891px) scaleX(0.9959);transform-origin:0 50%;">Version 1</div>
<div class="t" id="xa7aed7" style="left:1085px;top:563.06px;font-size:9.84px;color:#323130;font-weight:400;-webkit-text-stroke:0.2px #323130;transform:translateX(0.620px) scaleX(0.9549);transform-origin:0 50%;">BFBA63C3-0400-EC11-94EF-0...</div>
<div class="b" style="left:148px;top:585px;width:30px;height:1px;background:#ebebeb"></div>
<div class="b" style="left:179px;top:585px;width:538px;height:1px;background:#ebebeb"></div>
<div class="b" style="left:718px;top:585px;width:179px;height:1px;background:#ebebeb"></div>
<div class="b" style="left:898px;top:585px;width:179px;height:1px;background:#ebebeb"></div>
<div class="b" style="left:1078px;top:585px;width:161px;height:1px;background:#ebebeb"></div>
<div class="t" id="x39b1c0" style="left:187px;top:593.06px;font-size:9.8px;color:#3d7fd4;font-weight:400;-webkit-text-stroke:0.2px #3d7fd4;transform:translateX(0.096px) scaleX(0.9759);transform-origin:0 50%;">Project Request 2 Stage</div>
<div class="t" id="xde3c41" style="left:731px;top:593.06px;font-size:9.6px;color:#323130;font-weight:400;-webkit-text-stroke:0.2px #323130;transform:translateX(0.444px) scaleX(0.9730);transform-origin:0 50%;">Request</div>
<div class="t" id="xd8cecc" style="left:911px;top:593.06px;font-size:9.67px;color:#323130;font-weight:400;-webkit-text-stroke:0.2px #323130;transform:translateX(0.891px) scaleX(0.9959);transform-origin:0 50%;">Version 1</div>
<div class="t" id="xe0c23d" style="left:1085px;top:593.06px;font-size:9.84px;color:#323130;font-weight:400;-webkit-text-stroke:0.2px #323130;transform:translateX(0.831px) scaleX(0.9357);transform-origin:0 50%;">2F63F9EC-60FF-EB11-94EF-00...</div>
<div class="b" style="left:148px;top:615px;width:30px;height:1px;background:#ebebeb"></div>
<div class="b" style="left:179px;top:615px;width:538px;height:1px;background:#ebebeb"></div>
<div class="b" style="left:718px;top:615px;width:179px;height:1px;background:#ebebeb"></div>
<div class="b" style="left:898px;top:615px;width:179px;height:1px;background:#ebebeb"></div>
<div class="b" style="left:1078px;top:615px;width:161px;height:1px;background:#ebebeb"></div>
<div class="t" id="xd33563" style="left:187px;top:623.06px;font-size:9.8px;color:#3d7fd4;font-weight:400;-webkit-text-stroke:0.2px #3d7fd4;transform:translateX(0.096px) scaleX(0.9759);transform-origin:0 50%;">Project Request 3 Stage</div>
<div class="t" id="xb67773" style="left:731px;top:623.06px;font-size:9.6px;color:#323130;font-weight:400;-webkit-text-stroke:0.2px #323130;transform:translateX(0.444px) scaleX(0.9730);transform-origin:0 50%;">Request</div>
<div class="t" id="x85d6a8" style="left:911px;top:623.06px;font-size:9.67px;color:#323130;font-weight:400;-webkit-text-stroke:0.2px #323130;transform:translateX(0.891px) scaleX(0.9959);transform-origin:0 50%;">Version 1</div>
<div class="t" id="x766662" style="left:1085px;top:623.06px;font-size:9.84px;color:#323130;font-weight:400;-webkit-text-stroke:0.2px #323130;transform:translateX(0.992px) scaleX(0.9247);transform-origin:0 50%;">4E86EB83-FCFF-EB11-94EF-00...</div>
<div class="b" style="left:148px;top:645px;width:30px;height:1px;background:#ebebeb"></div>
<div class="b" style="left:179px;top:645px;width:538px;height:1px;background:#ebebeb"></div>
<div class="b" style="left:718px;top:645px;width:179px;height:1px;background:#ebebeb"></div>
<div class="b" style="left:898px;top:645px;width:179px;height:1px;background:#ebebeb"></div>
<div class="b" style="left:1078px;top:645px;width:161px;height:1px;background:#ebebeb"></div>
<div class="t" id="xbb2b27" style="left:187px;top:653.06px;font-size:9.8px;color:#3d7fd4;font-weight:400;-webkit-text-stroke:0.2px #3d7fd4;transform:translateX(0.334px) scaleX(0.9797);transform-origin:0 50%;">Project Standard (v1.0)</div>
<div class="t" id="x9d47cf" style="left:731px;top:653.06px;font-size:9.6px;color:#323130;font-weight:400;-webkit-text-stroke:0.2px #323130;transform:translateX(0.361px) scaleX(1.0081);transform-origin:0 50%;">Project</div>
<div class="t" id="xc7abe0" style="left:911px;top:653.06px;font-size:9.67px;color:#323130;font-weight:400;-webkit-text-stroke:0.2px #323130;transform:translateX(0.891px) scaleX(0.9959);transform-origin:0 50%;">Version 1</div>
<div class="t" id="xf21407" style="left:1086px;top:653.06px;font-size:9.84px;color:#323130;font-weight:400;-webkit-text-stroke:0.2px #323130;transform:translateX(0.203px) scaleX(0.9540);transform-origin:0 50%;">A36235B6-61FF-EB11-94EF-0...</div>
<div class="b" style="left:148px;top:675px;width:30px;height:1px;background:#ebebeb"></div>
<div class="b" style="left:179px;top:675px;width:538px;height:1px;background:#ebebeb"></div>
<div class="b" style="left:718px;top:675px;width:179px;height:1px;background:#ebebeb"></div>
<div class="b" style="left:898px;top:675px;width:179px;height:1px;background:#ebebeb"></div>
<div class="b" style="left:1078px;top:675px;width:161px;height:1px;background:#ebebeb"></div>
<div class="t" id="xb3eb39" style="left:163px;top:715.05px;font-size:9.0px;color:#3a3a3a;font-weight:400;-webkit-text-stroke:0.05px #3a3a3a;transform:translateX(0.161px) scaleX(0.9349);transform-origin:0 50%;">1 - 18 of 18</div>
<svg style="left:1173px;top:719.5px" width="9" height="8" viewBox="0 0 9 8"><path d="M0.6 0 V8" stroke="#c8c8c8" stroke-width="1"/><path d="M7.8 0.6 L3 4 L7.8 7.4 Z" fill="none" stroke="#c8c8c8" stroke-width="0.9" stroke-linejoin="round"/></svg>
<svg style="left:1193px;top:719px" width="10" height="9" viewBox="0 0 10 9"><path d="M4.5 0.4 L0.6 4.5 L4.5 8.6 M0.6 4.5 H9.8" fill="none" stroke="#c8c8c8" stroke-width="0.9"/></svg>
<div class="t" id="x771f05" style="left:1213px;top:714.95px;font-size:9.0px;color:#424242;font-weight:400;-webkit-text-stroke:0.05px #424242;transform:translateX(0.903px) scaleX(0.8698);transform-origin:0 50%;">Page 1</div>
<svg style="left:1250.5px;top:719px" width="10" height="9" viewBox="0 0 10 9"><path d="M5.5 0.4 L9.4 4.5 L5.5 8.6 M9.4 4.5 H0.2" fill="none" stroke="#c8c8c8" stroke-width="0.9"/></svg>
<div class="b" style="left:143px;top:738px;width:1137px;height:1px;background:#ededed"></div>
</div></body></html>
